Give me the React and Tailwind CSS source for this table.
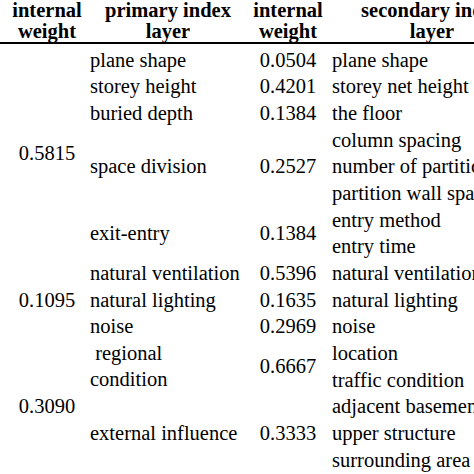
const Cell = ({ className = "", children }) => (
  <div className={`flex items-center whitespace-nowrap ${className}`}>{children}</div>
);

export default function App() {
  return (
    <div className="w-[474px] h-[474px] overflow-hidden bg-white text-black font-['Liberation_Serif',serif] text-[20.5px]">
      <div className="grid grid-cols-[88px_160px_80px_208px] h-[42px] font-bold leading-[21px]">
        <div className="pl-[6px] text-center">internal<br />weight</div>
        <div className="text-center">primary index<br />layer</div>
        <div className="text-center">internal<br />weight</div>
        <div className="text-center">secondary index<br />layer</div>
      </div>
      <div className="h-[2px] w-[474px] bg-black"></div>
      <div className="grid grid-cols-[88px_160px_80px_208px] grid-rows-[repeat(16,26.67px)] pt-[2.5px] leading-[26px]">
        <Cell className="col-start-1 row-start-1 row-span-8 justify-center pl-[6px]">0.5815</Cell>
        <Cell className="col-start-1 row-start-9 row-span-3 justify-center pl-[6px]">0.1095</Cell>
        <Cell className="col-start-1 row-start-12 row-span-5 justify-center pl-[6px]">0.3090</Cell>

        <Cell className="col-start-2 row-start-1 pl-[2px]">plane shape</Cell>
        <Cell className="col-start-2 row-start-2 pl-[2px]">storey height</Cell>
        <Cell className="col-start-2 row-start-3 pl-[2px]">buried depth</Cell>
        <Cell className="col-start-2 row-start-4 row-span-3 pl-[2px]">space division</Cell>
        <Cell className="col-start-2 row-start-7 row-span-2 pl-[2px]">exit-entry</Cell>
        <Cell className="col-start-2 row-start-9 pl-[2px]">natural ventilation</Cell>
        <Cell className="col-start-2 row-start-10 pl-[2px]">natural lighting</Cell>
        <Cell className="col-start-2 row-start-11 pl-[2px]">noise</Cell>
        <Cell className="col-start-2 row-start-12 row-span-2 pl-[2px]">
          <span className="leading-[26.67px]">&nbsp;regional<br />condition</span>
        </Cell>
        <Cell className="col-start-2 row-start-14 row-span-3 pl-[2px]">external influence</Cell>

        <Cell className="col-start-3 row-start-1 justify-center">0.0504</Cell>
        <Cell className="col-start-3 row-start-2 justify-center">0.4201</Cell>
        <Cell className="col-start-3 row-start-3 justify-center">0.1384</Cell>
        <Cell className="col-start-3 row-start-4 row-span-3 justify-center">0.2527</Cell>
        <Cell className="col-start-3 row-start-7 row-span-2 justify-center">0.1384</Cell>
        <Cell className="col-start-3 row-start-9 justify-center">0.5396</Cell>
        <Cell className="col-start-3 row-start-10 justify-center">0.1635</Cell>
        <Cell className="col-start-3 row-start-11 justify-center">0.2969</Cell>
        <Cell className="col-start-3 row-start-12 row-span-2 justify-center">0.6667</Cell>
        <Cell className="col-start-3 row-start-14 row-span-3 justify-center">0.3333</Cell>

        <Cell className="col-start-4 row-start-1 pl-[4px]">plane shape</Cell>
        <Cell className="col-start-4 row-start-2 pl-[4px]">storey net height</Cell>
        <Cell className="col-start-4 row-start-3 pl-[4px]">the floor</Cell>
        <Cell className="col-start-4 row-start-4 pl-[4px]">column spacing</Cell>
        <Cell className="col-start-4 row-start-5 pl-[4px]">number of partitions</Cell>
        <Cell className="col-start-4 row-start-6 pl-[4px]">partition wall spacing</Cell>
        <Cell className="col-start-4 row-start-7 pl-[4px]">entry method</Cell>
        <Cell className="col-start-4 row-start-8 pl-[4px]">entry time</Cell>
        <Cell className="col-start-4 row-start-9 pl-[4px]">natural ventilation</Cell>
        <Cell className="col-start-4 row-start-10 pl-[4px]">natural lighting</Cell>
        <Cell className="col-start-4 row-start-11 pl-[4px]">noise</Cell>
        <Cell className="col-start-4 row-start-12 pl-[4px]">location</Cell>
        <Cell className="col-start-4 row-start-13 pl-[4px]">traffic condition</Cell>
        <Cell className="col-start-4 row-start-14 pl-[4px]">adjacent basement</Cell>
        <Cell className="col-start-4 row-start-15 pl-[4px]">upper structure</Cell>
        <Cell className="col-start-4 row-start-16 pl-[4px]">surrounding area</Cell>
      </div>
    </div>
  );
}
